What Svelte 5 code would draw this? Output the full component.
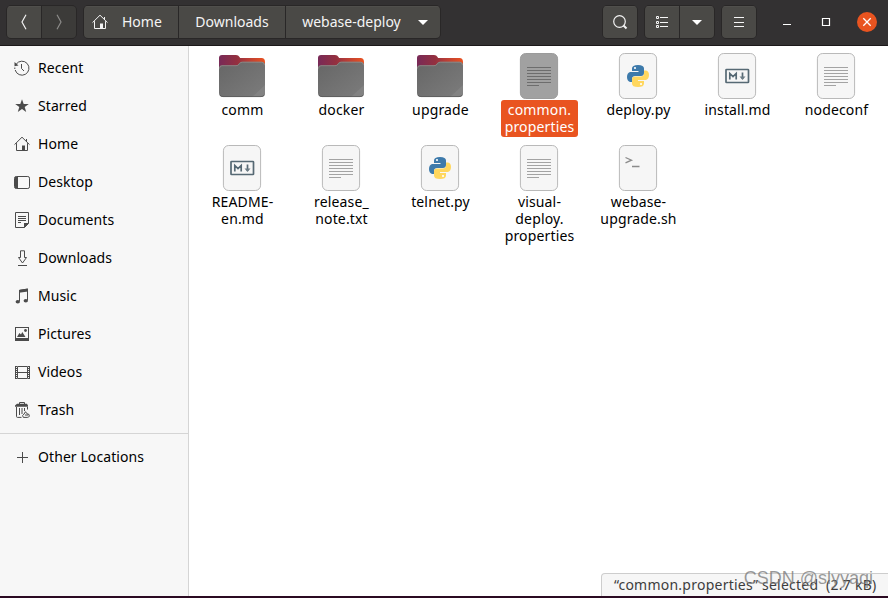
<script>
  const places = [
    { name: 'Recent', icon: 'recent' },
    { name: 'Starred', icon: 'star' },
    { name: 'Home', icon: 'home' },
    { name: 'Desktop', icon: 'desktop' },
    { name: 'Documents', icon: 'documents' },
    { name: 'Downloads', icon: 'downloads' },
    { name: 'Music', icon: 'music' },
    { name: 'Pictures', icon: 'pictures' },
    { name: 'Videos', icon: 'videos' },
    { name: 'Trash', icon: 'trash' }
  ];
  const files = [
    { lines: ['comm'], type: 'folder' },
    { lines: ['docker'], type: 'folder' },
    { lines: ['upgrade'], type: 'folder' },
    { lines: ['common.', 'properties'], type: 'text', selected: true },
    { lines: ['deploy.py'], type: 'python' },
    { lines: ['install.md'], type: 'markdown' },
    { lines: ['nodeconf'], type: 'text' },
    { lines: ['README-', 'en.md'], type: 'markdown' },
    { lines: ['release_', 'note.txt'], type: 'text' },
    { lines: ['telnet.py'], type: 'python' },
    { lines: ['visual-', 'deploy.', 'properties'], type: 'text' },
    { lines: ['webase-', 'upgrade.sh'], type: 'shell' }
  ];
</script>

{#snippet glyph(name)}
  <svg class="glyph" width="16" height="16" viewBox="0 0 16 16" fill="none" stroke="currentColor">
    {#if name === 'recent'}
      <path d="M2.2 4.2A7 7 0 1 1 1.2 10M7.5 4v4.5l2.5 2.5" />
      <path d="M.5 6.2V2l4 3.4z" fill="currentColor" stroke="none" />
      <path d="M.8 7.5v1.5" />
    {:else if name === 'star'}
      <path d="M8 1.2l1.7 4.8h5.1l-4.1 3.1 1.5 5L8 11.1l-4.2 3 1.5-5L1.2 6h5.1z" fill="currentColor" stroke="none" />
    {:else if name === 'home'}
      <path d="M.5 8.6L8 1.2l7.5 7.4M12.500 3v3M2.5 7.2v7.3H8M11 14.5h2.5V7.2" />
      <path d="M8 9.5h3V15H8z" fill="currentColor" stroke="none" />
    {:else if name === 'desktop'}
      <rect x=".5" y="2.5" width="15" height="12" rx="1.7" />
      <path d="M1 3h3v11H1z" fill="currentColor" stroke="none" />
    {:else if name === 'documents'}
      <path d="M1.5.5h13v11l-4 4h-9zM4 4.5h8M4 6.5h8M4 8.5h8M4 10.5h3" />
      <path d="M10 16v-5h5z" fill="currentColor" stroke="none" />
    {:else if name === 'downloads'}
      <path d="M6.5.8h4v6.7h2L8.5 13l-4-5.5h2zM4 15.5h9" />
    {:else if name === 'music'}
      <path d="M5.5 13V2.3l8-1.2v11" />
      <path d="M5 2l9-1.5v3L5 4.8z" fill="currentColor" stroke="none" />
      <ellipse cx="3.8" cy="13.7" rx="2.2" ry="1.8" fill="currentColor" stroke="none" />
      <ellipse cx="11.8" cy="12.7" rx="2.2" ry="1.8" fill="currentColor" stroke="none" />
    {:else if name === 'pictures'}
      <rect x="1.5" y="1.5" width="13" height="12" />
      <path d="M1 12h14v3H1zM3 11l2.4-4L7 8.5 8.3 6l3.2 5z" fill="currentColor" stroke="none" />
      <circle cx="11.5" cy="4.5" r="1.4" fill="currentColor" stroke="none" />
    {:else if name === 'videos'}
      <path d="M3.500 2.500h10v12h-10zM3.500 8.500h10" />
      <path d="M1.500 2v13M15.500 2v13" stroke-width="1" />
      <path d="M2.500 2v13M14.500 2v13" stroke-dasharray="1 1" />
    {:else if name === 'trash'}
      <path d="M5.5 2V.5h5V2M2.5 5v9.4q0 1 1 1h4M13.5 5v2.5M5.5 6v7M8 6v6M10.5 6v3" />
      <path d="M1 4.8V3.5l2-1.7h10l1 1.7v1.3z" fill="currentColor" stroke="none" />
      <path d="M9.3 15.4q-1.8-2 .8-3.4l1.4-2.3 1.5 2.1q2.8.1 2.3 2.4-.4 1.2-2 1.2zM11 13h3" fill="#f7f7f7" />
    {:else if name === 'plus'}
      <path d="M8.5 3v11M3 8.5h11" />
    {/if}
  </svg>
{/snippet}

{#snippet fileIcon(type, selected)}
  <svg class="file-icon" width="48" height="48" viewBox="0 0 48 48">
    {#if type === 'folder'}
      <defs>
        <linearGradient id="flap"><stop offset="0" stop-color="#782a58" /><stop offset=".4" stop-color="#94303f" /><stop offset=".6" stop-color="#b53c38" /><stop offset="1" stop-color="#ea5220" /></linearGradient>
        <linearGradient id="front" x2="1" y2="1"><stop offset="0" stop-color="#666" /><stop offset="1" stop-color="#7c7c7c" /></linearGradient>
      </defs>
      <path d="M1 18V6q0-3 3-3h14q2.5 0 3.5 2l.6 1h21.4q3.5 0 3.5 4v10z" fill="url(#flap)" />
      <path d="M1 16.5q0-3.2 3-3.2h14q1.6 0 2.6-1.2l.7-1q1-1.4 3-1.4h19.2q3.5 0 3.5 3.5V41q0 4-4 4H5q-4 0-4-4z" fill="url(#front)" />
      <path d="M1.5 16.5q0-2.8 2.5-2.8h14q1.8 0 2.9-1.3l.8-1q.9-1.2 2.6-1.2h19.2q3 0 3 3" fill="none" stroke="#a19795" stroke-width=".6" />
      <path d="M34 45L47 33v8q0 4-4 4z" fill="#828282" />
      <path d="M2 43q1 1.6 3 1.6h38q2 0 3-1.6" fill="none" stroke="#555" stroke-width=".7" />
    {:else}
      <rect x="5.4" y="1.5" width="37.2" height="45" rx="5.3" fill={selected ? '#a1a1a1' : '#f6f6f6'} stroke={selected ? '#9b9b9b' : '#b9b9b9'} stroke-width="1" />
      {#if type === 'text'}
        <path d="M12 15.5h24M12 18.5h24M12 21.5h24M12 24.5h24M12 27.5h24M12 30.5h24M12 33.5h12" stroke={selected ? '#6d6d6d' : '#a3a3a3'} stroke-width="1" />
      {:else if type === 'python'}
        <path d="M24 13q-6 0-6 3.5V19h6.5v1H16q-3 1-3 5t3 5h2v-3q0-3 3.5-3H27q3 0 3-3v-4.500q0-3.500-6-3.500z" fill="#3d7aab" />
        <path d="M24 35q6 0 6-3.500V29h-6v-1h8q3-1 3-5t-3-4.500h-2v3q0 3-3.500 3H21q-3 0-3 3v4q0 3.500 6 3.500z" fill="#ffd75e" />
        <circle cx="21" cy="16" r="1.100" fill="#fff" /><circle cx="27" cy="32" r="1.100" fill="#fff" />
      {:else if type === 'markdown'}
        <rect x="13" y="17.500" width="22.500" height="13" rx=".6" fill="none" stroke="#566974" stroke-width="1.700" />
        <path d="M16.800 27.500v-6l3.200 3 3.200-3v6M29.500 20.500v6.500" fill="none" stroke="#566974" stroke-width="1.700" />
        <path d="M26.500 24.500h6l-3 3.500z" fill="#6b7b84" />
      {:else if type === 'shell'}
        <path d="M11.500 13.500l6 2.700-6 2.700M18 22.500h7.500" fill="none" stroke="#8b8b8b" stroke-width="1.300" />
      {/if}
    {/if}
  </svg>
{/snippet}

<div class="window">
  <header>
    <div class="group nav">
      <button class="btn" aria-label="Back"><svg width="16" height="16" viewBox="0 0 16 16"><path d="M10 .8L6 8l4 7.200" fill="none" stroke="#f2f2f2" stroke-width="1.200" /></svg></button>
      <button class="btn off" aria-label="Forward"><svg width="16" height="16" viewBox="0 0 16 16"><path d="M6 .8L10 8l-4 7.200" fill="none" stroke="#8c8b89" stroke-width="1.200" /></svg></button>
    </div>
    <div class="group path">
      <button class="btn crumb home">{@render glyph('home')}<span>Home</span></button>
      <button class="btn crumb dl"><span>Downloads</span></button>
      <button class="btn crumb cur"><span>webase-deploy</span><i class="arrow"></i></button>
    </div>
    <div class="spacer"></div>
    <div class="group"><button class="btn" aria-label="Search"><svg width="16" height="16" viewBox="0 0 16 16" fill="none" stroke="#f2f2f2"><circle cx="7.500" cy="7.500" r="5.800" stroke-width="1.200" /><path d="M11.500 11.500l3 3" stroke-width="2" /></svg></button></div>
    <div class="group">
      <button class="btn" aria-label="List view"><svg width="16" height="16" viewBox="0 0 16 16" fill="none" stroke="#f7f7f7"><path d="M2.500 2.500h2v2h-2zM2.500 7.500h2v2h-2zM2.500 11.500h2v2h-2zM6 3.500h8M6 8.500h8M6 12.500h8" /></svg></button>
      <button class="btn" aria-label="View options"><i class="arrow"></i></button>
    </div>
    <div class="group"><button class="btn" aria-label="Menu"><svg width="16" height="16" viewBox="0 0 16 16"><path d="M3 3.500h10M3 8.500h10M3 12.500h10" stroke="#f7f7f7" /></svg></button></div>
    <div class="controls">
      <svg width="16" height="16" viewBox="0 0 16 16"><path d="M4 10.500h8" stroke="#fff" /></svg>
      <svg width="16" height="16" viewBox="0 0 16 16"><path d="M4.500 4.500h7v7h-7z" fill="none" stroke="#fff" stroke-width="1.200" /></svg>
      <svg width="20" height="20" viewBox="0 0 20 20"><circle cx="10" cy="10" r="10" fill="#e95420" /><path d="M6.300 6.300l7.400 7.400M13.700 6.300l-7.400 7.400" stroke="#fff" stroke-width="1.300" /></svg>
    </div>
  </header>
  <div class="body">
    <aside>
      <ul>
        {#each places as p}
          <li>{@render glyph(p.icon)}<span>{p.name}</span></li>
        {/each}
      </ul>
      <div class="other">{@render glyph('plus')}<span>Other Locations</span></div>
    </aside>
    <main>
      <div class="files">
        {#each files as f}
          <div class="file" class:selected={f.selected}>
            {@render fileIcon(f.type, f.selected)}
            <div class="label">{#each f.lines as line}<div>{line}</div>{/each}</div>
          </div>
        {/each}
      </div>
      <div class="status">“common.properties” selected  (2.7 kB)</div>
      <div class="watermark">CSDN @slyyaqi</div>
    </main>
  </div>
</div>

<style>
  .window { width: 888px; height: 598px; box-sizing: border-box; display: flex; flex-direction: column; background: #fff; border-bottom: 2px solid #2b0a22; font: 14px/17px "Noto Sans", sans-serif; letter-spacing: .08px; color: #000; overflow: hidden; }
  header { box-sizing: border-box; height: 46px; flex: none; display: flex; align-items: flex-start; padding: 5px 11px 0 6px; gap: 6px; background: #333132; border-bottom: 1px solid #1c191a; }
  .group { display: flex; border: 1px solid #292727; border-radius: 5px; background: #292727; gap: 1px; overflow: hidden; }
  .btn { width: 34px; height: 32px; display: flex; align-items: center; justify-content: center; border: 0; padding: 0; margin: 0; background: #4a4946; color: #f4f4f4; font: inherit; box-shadow: inset 0 1px #504f4c; }
  .off { background: #3c3b39; box-shadow: none; }
  .crumb span, li span, .other span { padding-bottom: 2px; }
  .home { width: 94px; justify-content: flex-start; padding-left: 8px; gap: 14px; }
  .dl { width: 106px; }
  .cur { width: 154px; gap: 17px; padding-left: 4px; box-sizing: border-box; }
  .arrow { width: 0; height: 0; border: 5px solid transparent; border-top-color: #fff; border-bottom: 0; }
  .spacer { flex: 1; }
  .controls { display: flex; align-items: center; height: 34px; width: 98px; margin-left: 16px; justify-content: space-between; }
  .body { flex: 1; display: flex; min-height: 0; }
  aside { box-sizing: border-box; width: 189px; background: #f7f7f7; border-right: 1px solid #d5d5d5; padding-top: 3px; }
  ul { list-style: none; margin: 0; padding: 0 0 4px; border-bottom: 1px solid #d5d5d5; }
  li, .other { display: flex; align-items: center; height: 38px; padding-left: 14px; gap: 8px; }
  aside .glyph { color: #4b4b4b; }
  .other { padding-top: 4px; }
  main { position: relative; flex: 1; overflow: hidden; }
  .files { display: grid; grid-template-columns: repeat(7, 99px); grid-auto-rows: 92px; padding: 6px 0 0 4px; }
  .file { display: flex; flex-direction: column; align-items: center; }
  .file-icon { display: block; flex: none; margin-right: 1.5px; }
  .label { text-align: center; padding: 1px 4px 2px; border-radius: 3px; white-space: nowrap; letter-spacing: .15px; }
  .selected .label { background: #e95420; color: #fff; }
  .status { position: absolute; right: -1px; bottom: 0; width: 288px; height: 23px; box-sizing: border-box; border: 1px solid #cdcdcd; border-bottom: 0; border-radius: 4px 0 0 0; background: #f6f6f6; padding: 1px 0 0 12px; white-space: pre; line-height: 19px; letter-spacing: .24px; color: #3d3d3d; }
  .watermark { position: absolute; right: 15px; bottom: 8px; font: 18px/20px "Liberation Sans", sans-serif; letter-spacing: 0; color: rgba(120,120,120,.75); white-space: nowrap; }
</style>
